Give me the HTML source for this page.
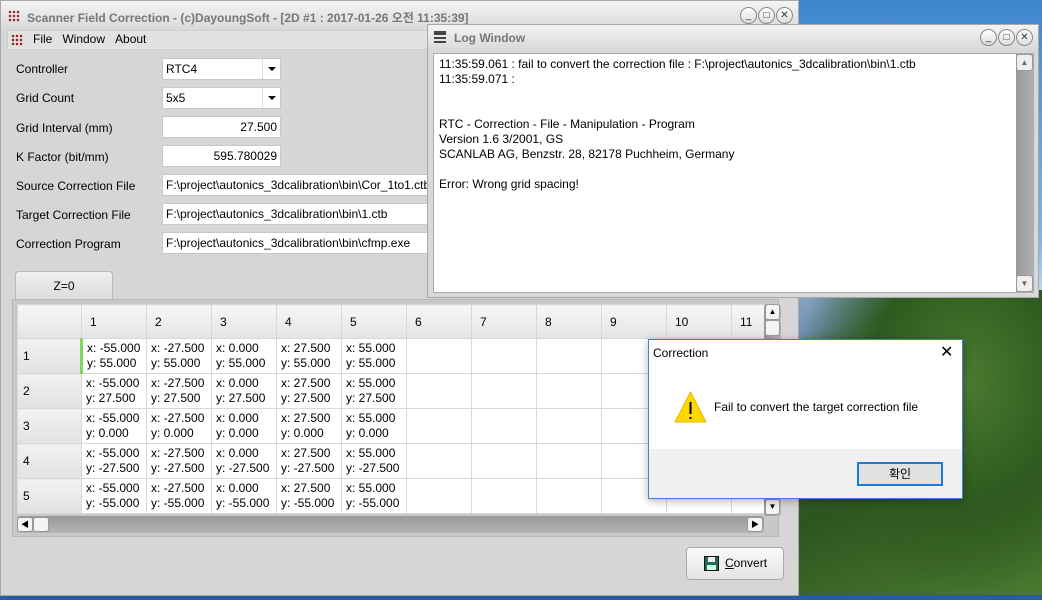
<!DOCTYPE html>
<html><head><meta charset="utf-8"><style>
*{box-sizing:border-box;margin:0;padding:0}
body{width:1042px;height:600px;overflow:hidden;position:relative;font-family:"Liberation Sans","Noto Sans CJK KR",sans-serif;font-size:12px;color:#000;
background:linear-gradient(180deg,#3f86cf 0%,#7fb5e6 40%,#c8def0 50%,#3c6a2a 54%,#2f5a22 75%,#3d6b2a 99%,#2a5aa0 99.2%)}
.abs{position:absolute}
.mtn{position:absolute;left:795px;top:290px;width:247px;height:305px;background:
radial-gradient(ellipse at 70% 30%,#4a7a30 0,#2e5a20 40%,transparent 70%),
linear-gradient(160deg,#8fa9c8 0,#6f8fb0 12%,#3d6a2a 22%,#2c5520 60%,#4a7a30 100%)}
.win{background:#d6d6d6;border:1px solid #a8a8a8}
.tb{background:linear-gradient(#f4f4f4,#d8d8d8);color:#777;font-weight:bold;font-size:12px}
.circ{position:absolute;width:17px;height:17px;border-radius:50%;border:1px solid #888;background:linear-gradient(#fff,#ddd);font-size:10px;text-align:center;line-height:15px;color:#333}
.inp{position:absolute;background:#fff;border:1px solid #c8c8c8;height:22px;font-size:12px;line-height:20px;padding-left:3px;white-space:nowrap;overflow:hidden}
.lbl{position:absolute;left:15px;font-size:12px}
.dd{position:absolute;right:0;top:0;width:18px;height:20px;border-left:1px solid #ddd;background:#fff}
.dd:after{content:"";position:absolute;left:5px;top:8px;border:4px solid transparent;border-top:4px solid #000;border-bottom:0}
table{border-collapse:collapse;position:absolute;left:16px;top:303px;table-layout:fixed;width:747px}
td{border:1px solid #d8d8d8;height:35px;font-size:12px;padding-left:4px;line-height:15px;vertical-align:middle;background:#fff;white-space:nowrap;overflow:hidden}
th{border:1px solid #d8d8d8;height:34px;font-weight:normal;text-align:left;padding-left:8px;background:linear-gradient(#f7f7f7,#e4e4e4);overflow:hidden}
td.rh{background:linear-gradient(#f2f2f2,#e2e2e2);padding-left:5px}
</style></head><body>
<div class="mtn"></div>

<div class="abs win" style="left:0;top:0;width:799px;height:596px;">
 <div class="abs tb" style="left:0;top:0;width:797px;height:30px;padding:8px 0 0 26px;">Scanner Field Correction - (c)DayoungSoft - [2D #1 : 2017-01-26 오전 11:35:39]</div>
 <div class="abs" style="left:7px;top:9px;width:12px;height:12px;background:radial-gradient(circle,#a02020 1px,transparent 1.5px) 0 0/4px 4px"></div>
 <div class="circ" style="left:739px;top:6px">_</div><div class="circ" style="left:757px;top:6px">□</div><div class="circ" style="left:775px;top:6px">✕</div>
 <div class="abs" style="left:6px;top:29px;width:791px;height:20px;background:#e2e2e2;border:1px solid #cfcfcf"></div>
 <div class="abs" style="left:10px;top:33px;width:12px;height:12px;background:radial-gradient(circle,#a02020 1px,transparent 1.5px) 0 0/4px 4px"></div>
 <div class="abs" style="left:32px;top:31px;font-size:12px">File&nbsp;&nbsp;&nbsp;Window&nbsp;&nbsp;&nbsp;About</div>
 <div class="lbl" style="top:61px">Controller</div>
 <div class="inp" style="left:161px;top:57px;width:119px">RTC4<div class="dd"></div></div>
 <div class="lbl" style="top:90px">Grid Count</div>
 <div class="inp" style="left:161px;top:86px;width:119px">5x5<div class="dd"></div></div>
 <div class="lbl" style="top:120px">Grid Interval (mm)</div>
 <div class="inp" style="left:161px;top:115px;width:119px;text-align:right;padding-right:3px">27.500</div>
 <div class="lbl" style="top:149px">K Factor (bit/mm)</div>
 <div class="inp" style="left:161px;top:144px;width:119px;text-align:right;padding-right:3px">595.780029</div>
 <div class="lbl" style="top:178px">Source Correction File</div>
 <div class="inp" style="left:161px;top:173px;width:300px">F:\project\autonics_3dcalibration\bin\Cor_1to1.ctb</div>
 <div class="lbl" style="top:207px">Target Correction File</div>
 <div class="inp" style="left:161px;top:202px;width:300px">F:\project\autonics_3dcalibration\bin\1.ctb</div>
 <div class="lbl" style="top:236px">Correction Program</div>
 <div class="inp" style="left:161px;top:231px;width:300px">F:\project\autonics_3dcalibration\bin\cfmp.exe</div>
 <div class="abs" style="left:14px;top:270px;width:98px;height:29px;border:1px solid #b8b8b8;border-bottom:none;border-radius:4px 4px 0 0;background:linear-gradient(#efefef,#dcdcdc);text-align:center;line-height:28px">Z=0</div>
 <div class="abs" style="left:11px;top:298px;width:767px;height:238px;border:1px solid #b8b8b8;background:#c8c8c8"></div>
 <table>
  <colgroup><col style="width:64px"><col style="width:65px"><col style="width:65px"><col style="width:65px"><col style="width:65px"><col style="width:65px"><col style="width:65px"><col style="width:65px"><col style="width:65px"><col style="width:65px"><col style="width:65px"><col style="width:33px"></colgroup>
  <tr><th></th><th>1</th><th>2</th><th>3</th><th>4</th><th>5</th><th>6</th><th>7</th><th>8</th><th>9</th><th>10</th><th>11</th></tr>
  <tr><td class="rh">1</td><td style="border-left:3px solid #7fd860">x: -55.000<br>y: 55.000</td><td>x: -27.500<br>y: 55.000</td><td>x: 0.000<br>y: 55.000</td><td>x: 27.500<br>y: 55.000</td><td>x: 55.000<br>y: 55.000</td><td></td><td></td><td></td><td></td><td></td><td></td></tr>
  <tr><td class="rh">2</td><td>x: -55.000<br>y: 27.500</td><td>x: -27.500<br>y: 27.500</td><td>x: 0.000<br>y: 27.500</td><td>x: 27.500<br>y: 27.500</td><td>x: 55.000<br>y: 27.500</td><td></td><td></td><td></td><td></td><td></td><td></td></tr>
  <tr><td class="rh">3</td><td>x: -55.000<br>y: 0.000</td><td>x: -27.500<br>y: 0.000</td><td>x: 0.000<br>y: 0.000</td><td>x: 27.500<br>y: 0.000</td><td>x: 55.000<br>y: 0.000</td><td></td><td></td><td></td><td></td><td></td><td></td></tr>
  <tr><td class="rh">4</td><td>x: -55.000<br>y: -27.500</td><td>x: -27.500<br>y: -27.500</td><td>x: 0.000<br>y: -27.500</td><td>x: 27.500<br>y: -27.500</td><td>x: 55.000<br>y: -27.500</td><td></td><td></td><td></td><td></td><td></td><td></td></tr>
  <tr><td class="rh">5</td><td>x: -55.000<br>y: -55.000</td><td>x: -27.500<br>y: -55.000</td><td>x: 0.000<br>y: -55.000</td><td>x: 27.500<br>y: -55.000</td><td>x: 55.000<br>y: -55.000</td><td></td><td></td><td></td><td></td><td></td><td></td></tr>
 </table>
 <div class="abs" style="left:16px;top:515px;width:747px;height:17px;background:linear-gradient(#999,#b5b5b5);border-radius:3px"></div>
 <div class="abs" style="left:16px;top:516px;width:16px;height:15px;background:#f4f4f4;border:1px solid #999;border-radius:3px;font-size:8px;text-align:center;line-height:13px">◀</div>
 <div class="abs" style="left:32px;top:516px;width:16px;height:15px;background:#f4f4f4;border:1px solid #999;border-radius:3px"></div>
 <div class="abs" style="left:746px;top:516px;width:16px;height:15px;background:#f4f4f4;border:1px solid #999;border-radius:3px;font-size:8px;text-align:center;line-height:13px">▶</div>
 <div class="abs" style="left:763px;top:303px;width:17px;height:212px;background:linear-gradient(90deg,#999,#b5b5b5);border-radius:3px"></div>
 <div class="abs" style="left:764px;top:303px;width:15px;height:16px;background:#f4f4f4;border:1px solid #999;border-radius:3px;font-size:8px;text-align:center;line-height:14px">▲</div>
 <div class="abs" style="left:764px;top:319px;width:15px;height:16px;background:#f4f4f4;border:1px solid #999;border-radius:3px"></div>
 <div class="abs" style="left:764px;top:498px;width:15px;height:16px;background:#f4f4f4;border:1px solid #999;border-radius:3px;font-size:8px;text-align:center;line-height:14px">▼</div>
 <div class="abs" style="left:685px;top:546px;width:98px;height:33px;border:1px solid #aaa;border-radius:4px;background:linear-gradient(#fafafa,#e4e4e4);line-height:31px;padding-left:38px">
  <span style="position:absolute;left:17px;top:8px;width:15px;height:15px;background:#1f6a5a;border:1px solid #111"><span style="position:absolute;left:3px;top:0;width:7px;height:5px;background:#eee"></span><span style="position:absolute;left:2px;top:8px;width:9px;height:5px;background:#cfd"></span></span><u>C</u>onvert</div>
</div>

<div class="abs win" style="left:427px;top:24px;width:612px;height:274px;background:#d8d8d8">
 <div class="abs tb" style="left:0;top:0;width:610px;height:26px;padding:6px 0 0 26px">Log Window</div>
 <div class="abs" style="left:6px;top:6px;width:12px;height:12px;border-top:2px solid #444;background:repeating-linear-gradient(#444 0 2px,transparent 2px 4px)"></div>
 <div class="circ" style="left:552px;top:4px">_</div><div class="circ" style="left:570px;top:4px">□</div><div class="circ" style="left:588px;top:4px">✕</div>
 <div class="abs" style="left:5px;top:28px;width:601px;height:240px;background:#fff;border:1px solid #aaa;padding:3px 0 0 5px;line-height:15px;font-size:12px">
 11:35:59.061 : fail to convert the correction file : F:\project\autonics_3dcalibration\bin\1.ctb<br>11:35:59.071 :<br><br><br>RTC - Correction - File - Manipulation - Program<br>Version 1.6 3/2001, GS<br>SCANLAB AG, Benzstr. 28, 82178 Puchheim, Germany<br><br>Error: Wrong grid spacing!</div>
 <div class="abs" style="left:588px;top:29px;width:17px;height:238px;background:linear-gradient(90deg,#999,#b0b0b0)"></div>
 <div class="abs" style="left:588px;top:29px;width:17px;height:17px;background:#eee;border:1px solid #999;border-radius:3px;font-size:8px;text-align:center;line-height:15px;color:#666">▲</div>
 <div class="abs" style="left:588px;top:250px;width:17px;height:17px;background:#eee;border:1px solid #999;border-radius:3px;font-size:8px;text-align:center;line-height:15px;color:#666">▼</div>
</div>

<div class="abs" style="left:648px;top:339px;width:315px;height:160px;border:1px solid #3b85d6;background:#fff;box-shadow:0 2px 8px rgba(0,0,0,.3)">
 <div class="abs" style="left:4px;top:6px;font-size:12px">Correction</div>
 <div class="abs" style="left:291px;top:2px;font-size:16px">✕</div>
 <svg class="abs" style="left:25px;top:51px" width="33" height="33"><polygon points="16.5,1 32,31 1,31" fill="#ffd800" stroke="#e8b800"/><rect x="15.5" y="11" width="2" height="12" fill="#000"/><rect x="15.5" y="26" width="2" height="2" fill="#000"/></svg>
 <div class="abs" style="left:65px;top:60px;font-size:12px">Fail to convert the target correction file</div>
 <div class="abs" style="left:0;top:109px;width:313px;height:49px;background:#f0f0f0"></div>
 <div class="abs" style="left:208px;top:122px;width:86px;height:24px;border:2px solid #1e7ad7;background:#e1e1e1;text-align:center;line-height:20px">확인</div>
</div>
</body></html>
